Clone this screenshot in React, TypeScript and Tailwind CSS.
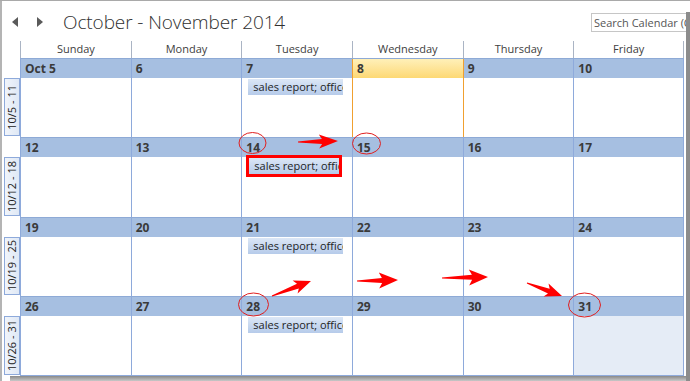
import React from 'react';

type Week = { label: string; days: string[]; height: string };

const weeks: Week[] = [
  { label: '10/5 - 11', days: ['Oct 5', '6', '7', '8', '9', '10'], height: 'h-[79px]' },
  { label: '10/12 - 18', days: ['12', '13', '14', '15', '16', '17'], height: 'h-[80px]' },
  { label: '10/19 - 25', days: ['19', '20', '21', '22', '23', '24'], height: 'h-[79px]' },
  { label: '10/26 - 31', days: ['26', '27', '28', '29', '30', '31'], height: 'h-[80px]' },
];

const dayNames = ['Sunday', 'Monday', 'Tuesday', 'Wednesday', 'Thursday', 'Friday'];

function cn(...classes: Array<string | false | null | undefined>) {
  return classes.filter(Boolean).join(' ');
}

// red annotation arrow: thin tail widening into a triangular head
function arrow(x1: number, y1: number, x2: number, y2: number, L = 16, W = 7) {
  const len = Math.hypot(x2 - x1, y2 - y1);
  const ux = (x2 - x1) / len;
  const uy = (y2 - y1) / len;
  const nx = -uy;
  const ny = ux;
  const bx = x2 - ux * L;
  const by = y2 - uy * L;
  const p = (x: number, y: number) => `${x.toFixed(1)},${y.toFixed(1)}`;
  return [
    p(x1 + nx * 0.6, y1 + ny * 0.6),
    p(bx + nx * 2.5, by + ny * 2.5),
    p(bx - ux * 3 + nx * W, by - uy * 3 + ny * W),
    p(x2, y2),
    p(bx - ux * 3 - nx * W, by - uy * 3 - ny * W),
    p(bx - nx * 2.5, by - ny * 2.5),
    p(x1 - nx * 0.6, y1 - ny * 0.6),
  ].join(' ');
}

function EventChip() {
  return (
    <div className="h-[16px] w-full overflow-hidden whitespace-nowrap bg-gradient-to-b from-[#dce7f6] to-[#b6cbea] pl-[5px] text-[11px] leading-[16px] text-[#1e1e1e]">
      sales report; office meeting
    </div>
  );
}

function WeekRow({ week, index }: { week: Week; index: number }) {
  return (
    <div className={cn('flex', week.height)}>
      <div className="flex w-[18px] flex-col pt-[20px] pb-[1px] pl-[2px]">
        <div className="flex flex-1 items-center justify-center overflow-hidden border border-[#8eaadb] bg-gradient-to-r from-[#f1f5fb] to-[#dfe8f5]">
          <span className="whitespace-nowrap text-[11px] leading-[14px] text-[#222] [writing-mode:vertical-rl] rotate-180">
            {week.label}
          </span>
        </div>
      </div>
      <div className="flex w-[664px] flex-col">
        <div className="grid h-[20px] grid-cols-6 border-t border-[#8eaad6] bg-[#a6bfe1]">
          {week.days.map((d, i) => {
            const today = index === 0 && i === 3;
            return (
              <div
                key={d}
                className={cn(
                  'border-l pl-[4px] text-[12px] font-bold leading-[20px] text-[#3a3a3a]',
                  today ? 'border-[#f0a030] bg-gradient-to-b from-[#fff0b8] to-[#fdd76f]' : 'border-[#8eaadb]',
                  index === 0 && i === 4 && 'border-l-[#f0a030]',
                  i === 5 && 'border-r border-r-[#8eaadb]',
                )}
              >
                {d}
              </div>
            );
          })}
        </div>
        <div className={cn('grid flex-1 grid-cols-6', index === 3 && 'border-b border-[#8eaadb]')}>
          {week.days.map((d, i) => (
            <div
              key={d}
              className={cn(
                'border-l',
                index === 0 && (i === 3 || i === 4) ? 'border-[#f0a030]' : 'border-[#8eaadb]',
                i === 5 && 'border-r border-r-[#8eaadb]',
                index === 3 && i === 5 ? 'bg-[#e5ecf6]' : 'bg-white',
              )}
            >
              {i === 2 &&
                (index === 1 ? (
                  <div className="relative mt-[-2px] ml-[4px] w-[96px] border-[3px] border-[#ff0000]">
                    <EventChip />
                  </div>
                ) : (
                  <div className="mt-[1px] ml-[6px] w-[95px]">
                    <EventChip />
                  </div>
                ))}
            </div>
          ))}
        </div>
      </div>
    </div>
  );
}

export default function App() {
  return (
    <div className="relative flex h-[381px] w-[690px] overflow-hidden border-t border-[#a9a9a9] bg-white font-['Open_Sans','Noto_Sans',sans-serif]">
      <div className="w-[2px] bg-[#b4b4b4]" />
      <div className="flex w-[684px] flex-col">
        <header className="flex h-[40px] items-start">
          <div className="mt-[16px] ml-[10px] flex items-center gap-[19px]">
            <svg width="6" height="10" viewBox="0 0 6 10">
              <path d="M6 0 L0 5 L6 10 Z" fill="#5a5a5a" />
            </svg>
            <svg width="6" height="10" viewBox="0 0 6 10">
              <path d="M0 0 L6 5 L0 10 Z" fill="#5a5a5a" />
            </svg>
          </div>
          <h1 className="mt-[8px] ml-[20px] text-[19px] font-light leading-[27px] tracking-[-0.1px] text-[#303030]">
            October - November 2014
          </h1>
          <div className="mt-[12px] ml-auto h-[19px] w-[95px] overflow-hidden whitespace-nowrap border-y border-l border-[#c6c6c6] pl-[2px] text-[11px] leading-[17px] text-[#555]">
            Search Calendar (Ctrl+E)
          </div>
        </header>

        <div className="ml-[18px] grid h-[17px] w-[664px] grid-cols-6">
          {dayNames.map((d, i) => (
            <div
              key={d}
              className={cn(
                'border-l border-[#aab4c4] text-center text-[11px] leading-[16px] text-[#404040]',
                i === 5 && 'border-r',
              )}
            >
              {d}
            </div>
          ))}
        </div>

        {weeks.map((w, i) => (
          <WeekRow key={w.label} week={w} index={i} />
        ))}

        <div className="ml-[8px] h-[5px] bg-gradient-to-b from-[#8a8a8a] to-[#c8c8c8]" />
      </div>
      <div className="mt-[11px] w-[4px] bg-[#8c8c8c]" />

      <svg className="pointer-events-none absolute top-[-1px] left-0" width="690" height="381" viewBox="0 0 690 381">
        <g fill="none" stroke="#e02020" strokeWidth="1">
          <ellipse cx="252.5" cy="143" rx="13.5" ry="10.5" />
          <ellipse cx="366.5" cy="143.5" rx="14" ry="10.5" />
          <ellipse cx="253.5" cy="304.5" rx="15" ry="11.5" />
          <ellipse cx="584.5" cy="305" rx="16" ry="12" />
        </g>
        <g fill="#ff0000">
          <polygon points={arrow(298, 142, 338, 141, 16, 7)} />
          <polygon points={arrow(272, 296, 311, 281, 14, 7)} />
          <polygon points={arrow(357, 281, 398, 280, 16, 8)} />
          <polygon points={arrow(442, 278, 488, 277, 16, 8)} />
          <polygon points={arrow(527, 283, 562, 296, 14, 7)} />
        </g>
      </svg>
    </div>
  );
}
